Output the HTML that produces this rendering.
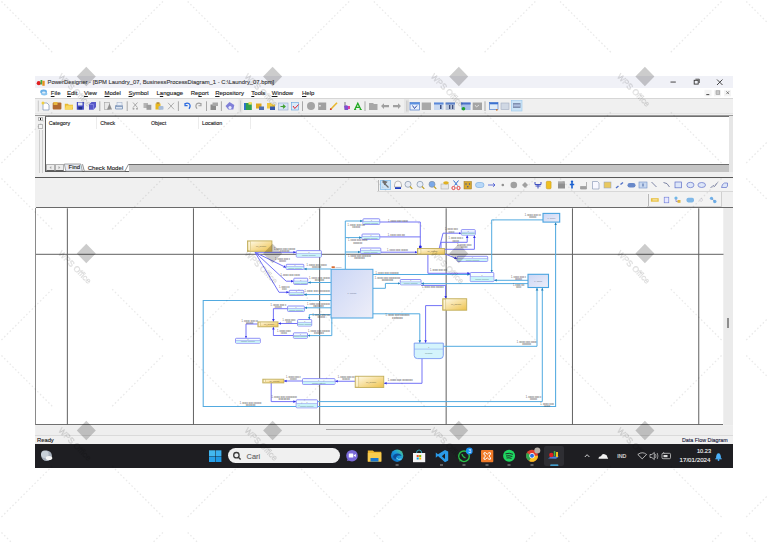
<!DOCTYPE html>
<html><head><meta charset="utf-8">
<style>
*{margin:0;padding:0;box-sizing:border-box}
html,body{width:768px;height:543px;overflow:hidden;background:#fff;font-family:"Liberation Sans",sans-serif;position:relative}
.a{position:absolute}
.t{position:absolute;white-space:nowrap;line-height:1;-webkit-text-stroke:0.12px currentColor}
.u{text-decoration:underline;text-decoration-thickness:0.5px;text-underline-offset:0.6px}
svg{position:absolute;left:0;top:0;overflow:visible}
</style></head><body>
<div class="a" style="left:35px;top:76px;width:698px;height:392px;background:#f0f0f0;"></div>
<div class="a" style="left:35px;top:76px;width:698px;height:12px;background:#f0f1f7;"></div>
<div class="t" style="left:47.5px;top:80.4px;font-size:5.85px;color:#3a3a3a;">PowerDesigner - [BPM Laundry_07, BusinessProcessDiagram_1 - C:\Laundry_07.bpm]</div>
<div class="a" style="left:35px;top:88px;width:698px;height:10px;background:#ffffff;"></div>
<div class="t" style="left:50.8px;top:89.8px;font-size:6.0px;color:#1a1a1a;"><span class="u">F</span>ile</div>
<div class="t" style="left:67px;top:89.8px;font-size:6.0px;color:#1a1a1a;"><span class="u">E</span>dit</div>
<div class="t" style="left:84px;top:89.8px;font-size:6.0px;color:#1a1a1a;"><span class="u">V</span>iew</div>
<div class="t" style="left:104.5px;top:89.8px;font-size:6.0px;color:#1a1a1a;"><span class="u">M</span>odel</div>
<div class="t" style="left:128.5px;top:89.8px;font-size:6.0px;color:#1a1a1a;"><span class="u">S</span>ymbol</div>
<div class="t" style="left:156.5px;top:89.8px;font-size:6.0px;color:#1a1a1a;">L<span class="u">a</span>nguage</div>
<div class="t" style="left:190.7px;top:89.8px;font-size:6.0px;color:#1a1a1a;">Re<span class="u">p</span>ort</div>
<div class="t" style="left:215.2px;top:89.8px;font-size:6.0px;color:#1a1a1a;"><span class="u">R</span>epository</div>
<div class="t" style="left:251.3px;top:89.8px;font-size:6.0px;color:#1a1a1a;"><span class="u">T</span>ools</div>
<div class="t" style="left:271.8px;top:89.8px;font-size:6.0px;color:#1a1a1a;"><span class="u">W</span>indow</div>
<div class="t" style="left:302px;top:89.8px;font-size:6.0px;color:#1a1a1a;"><span class="u">H</span>elp</div>
<div class="a" style="left:35px;top:98px;width:698px;height:1px;background:#d6d6d6;"></div>
<div class="a" style="left:35px;top:113.2px;width:698px;height:0.8px;background:#e4e4e4;"></div>
<div class="a" style="left:35px;top:115px;width:698px;height:1px;background:#9a9a9a;"></div>
<div class="a" style="left:44.8px;top:116px;width:684px;height:56px;background:#ffffff;border-left:1.3px solid #5a5a5a;border-top:1px solid #707070"></div>
<div class="t" style="left:48.7px;top:121.0px;font-size:5.3px;color:#222;">Category</div>
<div class="t" style="left:100.2px;top:121.0px;font-size:5.3px;color:#222;">Check</div>
<div class="t" style="left:150.9px;top:121.0px;font-size:5.3px;color:#222;">Object</div>
<div class="t" style="left:202.1px;top:121.0px;font-size:5.3px;color:#222;">Location</div>
<div class="a" style="left:96.3px;top:117px;width:0.6px;height:12px;background:#ececec;"></div>
<div class="a" style="left:198.4px;top:117px;width:0.6px;height:12px;background:#ececec;"></div>
<div class="a" style="left:250px;top:117px;width:0.6px;height:12px;background:#ececec;"></div>
<div class="a" style="left:128.7px;top:163.5px;width:600px;height:8.5px;background:#c4c4c4;border-top:1px solid #6e6e6e"></div>
<div class="a" style="left:44.8px;top:171.2px;width:84px;height:0.9px;background:#5a5a5a;"></div>
<div class="a" style="left:46px;top:164px;width:8.5px;height:7.3px;background:#ececec;border:0.6px solid #b0b0b0;border-bottom:1px solid #606060"></div>
<div class="a" style="left:54.6px;top:164px;width:9px;height:7.3px;background:#ececec;border:0.6px solid #b0b0b0;border-bottom:1px solid #606060"></div>
<svg width="768" height="543"><path d="M64.3 164 l1.6 7.2 h16.5 l-1.6 -7.2z" fill="#e6eaf2" stroke="#707070" stroke-width="0.6"/><path d="M82.5 164.2 l1.8 7 h40.6 l3.8 -7.2" fill="#fff" stroke="#606060" stroke-width="0.7"/><path d="M49.5 167.6 l1.8 -1.6 v3.2z M60.3 167.6 l-1.8 -1.6 v3.2z" fill="#a8a8a8"/></svg>
<div class="t" style="left:68.6px;top:165.3px;font-size:5.95px;color:#1a1a1a;">Find</div>
<div class="t" style="left:87.7px;top:164.6px;font-size:6.1px;color:#1a1a1a;">Check Model</div>
<div class="a" style="left:37.8px;top:116.5px;width:5.2px;height:4.6px;background:#f4f4f4;border:0.6px solid #b8b8b8"></div>
<div class="a" style="left:39.6px;top:117.8px;width:1.8px;height:1.8px;background:#111;"></div>
<div class="a" style="left:37.8px;top:123.8px;width:5.2px;height:5.6px;background:#f4f4f4;border:0.6px solid #b8b8b8"></div>
<div class="a" style="left:39.3px;top:130px;width:0.8px;height:42.5px;background:#d0d0d0;"></div>
<div class="a" style="left:42px;top:130px;width:0.8px;height:42.5px;background:#d0d0d0;"></div>
<div class="a" style="left:728.5px;top:116px;width:4.5px;height:56px;background:#e6e6e6;"></div>
<div class="a" style="left:35px;top:177px;width:698px;height:1px;background:#585858;"></div>
<div class="a" style="left:377px;top:178.6px;width:355.5px;height:13.5px;background:#f3f3f3;border-bottom:1px solid #d8d8d8"></div>
<div class="a" style="left:647px;top:192.3px;width:74.5px;height:14.8px;background:#f3f3f3;border-bottom:1px solid #d0d0d0;border-right:1.5px solid #d0d0d0"></div>
<div class="a" style="left:377.6px;top:180px;width:1.2px;height:11px;background:#b8b8b8;"></div>
<div class="a" style="left:647.5px;top:193.5px;width:1.2px;height:12.5px;background:#b8b8b8;"></div>
<div class="a" style="left:379.7px;top:179.6px;width:11px;height:10.4px;background:#cce4f7;border:1px solid #99c9ef"></div>
<div class="a" style="left:35.3px;top:207.5px;width:688.2px;height:217.5px;background:#ffffff;border-left:1.4px solid #8a8a8a;border-bottom:1px solid #707070"></div>
<div class="a" style="left:723.8px;top:208.2px;width:9.2px;height:217px;background:#ebebeb;"></div>
<div class="a" style="left:35.5px;top:207.1px;width:697px;height:1.1px;background:#6a6a6a;"></div>
<div class="a" style="left:726.5px;top:318px;width:2.2px;height:10.2px;background:#8e8e8e;"></div>
<div class="a" style="left:35.5px;top:425.5px;width:697.5px;height:9.5px;background:#eeeeee;"></div>
<div class="a" style="left:326px;top:428.9px;width:105px;height:1.6px;background:#a6a6a6;"></div>
<div class="a" style="left:35px;top:435px;width:698px;height:0.8px;background:#dadada;"></div>
<div class="t" style="left:37px;top:437.9px;font-size:5.8px;color:#202020;">Ready</div>
<div class="t" style="left:682px;top:437.9px;font-size:5.35px;color:#1c1c40;">Data Flow Diagram</div>
<div class="a" style="left:35px;top:443.7px;width:698px;height:24px;background:#1e1e22;"></div>
<div class="a" style="left:544.3px;top:446.1px;width:19.4px;height:20.2px;background:#2e2e33;border-radius:2px"></div>
<div class="a" style="left:227.7px;top:448.4px;width:112px;height:15px;background:#f0f0f0;border-radius:7.5px"></div>
<div class="t" style="left:246.6px;top:453.0px;font-size:7.4px;color:#5e5e5e;">Cari</div>
<div class="t" style="left:617.3px;top:453.7px;font-size:5.2px;color:#e0e0e0;">IND</div>
<div class="t" style="left:697px;top:449px;font-size:5.6px;color:#f0f0f0;">10.23</div>
<div class="t" style="left:679.5px;top:457px;font-size:6.2px;color:#f0f0f0;">17/01/2024</div>
<svg width="768" height="543" viewBox="0 0 768 543">
<defs>
<linearGradient id="gy" x1="0" y1="0" x2="1" y2="1"><stop offset="0" stop-color="#fffcee"/><stop offset="1" stop-color="#eec24c"/></linearGradient>
<linearGradient id="gp" x1="0" y1="0" x2="1" y2="1"><stop offset="0" stop-color="#cad6f6"/><stop offset="1" stop-color="#eeeef8"/></linearGradient>
<marker id="mb" markerWidth="4" markerHeight="4" refX="2.6" refY="1.6" orient="auto" markerUnits="userSpaceOnUse"><path d="M0 0.3 L2.6 1.6 L0 2.9z" fill="#3030e8"/></marker>
<marker id="ml" markerWidth="4" markerHeight="4" refX="2.6" refY="1.6" orient="auto" markerUnits="userSpaceOnUse"><path d="M0 0.3 L2.6 1.6 L0 2.9z" fill="#2080b8"/></marker>
</defs>
<rect x="66.85000000000001" y="208.3" width="1.0" height="216.5" fill="#626262"/>
<rect x="192.95" y="208.3" width="1.0" height="216.5" fill="#626262"/>
<rect x="319.15" y="208.3" width="1.0" height="216.5" fill="#626262"/>
<rect x="445.65" y="208.3" width="1.0" height="216.5" fill="#626262"/>
<rect x="571.95" y="208.3" width="1.0" height="216.5" fill="#626262"/>
<rect x="698.25" y="208.3" width="1.0" height="216.5" fill="#626262"/>
<rect x="36" y="253.8" width="687.5" height="1.0" fill="#626262"/>
<path d="M543 219.9 H491.7 V272.3" fill="none" stroke="#52aae0" stroke-width="1.0" marker-end="url(#ml)"/>
<path d="M331 300.5 H203.2 V406.5 H555.6 V222.5" fill="none" stroke="#52aae0" stroke-width="1.05" marker-end="url(#ml)"/>
<path d="M317.5 401.6 H542.3 V288" fill="none" stroke="#52aae0" stroke-width="1.0" marker-end="url(#ml)"/>
<path d="M443.3 346.3 H537 V288" fill="none" stroke="#52aae0" stroke-width="1.0" marker-end="url(#ml)"/>
<path d="M528 280.3 H494.2" fill="none" stroke="#52aae0" stroke-width="1.0" marker-end="url(#ml)"/>
<path d="M372.9 274.5 H470" fill="none" stroke="#52aae0" stroke-width="1.0" marker-end="url(#ml)"/>
<path d="M528 283.6 H421.2" fill="none" stroke="#52aae0" stroke-width="1.0" marker-end="url(#ml)"/>
<path d="M372.9 288.3 H385.4 V283.4 H400.2" fill="none" stroke="#52aae0" stroke-width="1.0" marker-end="url(#ml)"/>
<path d="M372.9 313.8 H419.8 V342.8" fill="none" stroke="#52aae0" stroke-width="1.0" marker-end="url(#ml)"/>
<path d="M345.3 269 V221 H362.8" fill="none" stroke="#52aae0" stroke-width="1.0" marker-end="url(#ml)"/>
<path d="M345.3 237.6 H361.8" fill="none" stroke="#52aae0" stroke-width="1.0" marker-end="url(#ml)"/>
<path d="M345.3 252 H360.3" fill="none" stroke="#52aae0" stroke-width="1.0" marker-end="url(#ml)"/>
<path d="M331 269 H304" fill="none" stroke="#52aae0" stroke-width="1.0" marker-end="url(#ml)"/>
<path d="M331 282.5 H308.1" fill="none" stroke="#52aae0" stroke-width="1.0" marker-end="url(#ml)"/>
<path d="M331 294.6 H304" fill="none" stroke="#52aae0" stroke-width="1.0" marker-end="url(#ml)"/>
<path d="M331 307.8 H304.6" fill="none" stroke="#52aae0" stroke-width="1.0" marker-end="url(#ml)"/>
<path d="M331 314.6 H309.3 V319.3" fill="none" stroke="#52aae0" stroke-width="1.0" marker-end="url(#ml)"/>
<path d="M331.8 318 V335.6 H307.7" fill="none" stroke="#52aae0" stroke-width="1.0" marker-end="url(#ml)"/>
<path d="M379.7 222 H420.3 V248.3" fill="none" stroke="#6c6cf6" stroke-width="0.95" marker-end="url(#mb)"/>
<path d="M379.7 236.9 H420.3" fill="none" stroke="#6c6cf6" stroke-width="0.95"/>
<path d="M380.8 252.2 H417.3" fill="none" stroke="#6c6cf6" stroke-width="0.95" marker-end="url(#mb)"/>
<path d="M427.9 254.2 V273.3 H470" fill="none" stroke="#6c6cf6" stroke-width="0.95" marker-end="url(#mb)"/>
<path d="M439.2 248.5 L443 233.2 H461.1" fill="none" stroke="#6c6cf6" stroke-width="0.95" marker-end="url(#mb)"/>
<path d="M441 248.5 V242.3 H467.2 V235.4" fill="none" stroke="#6c6cf6" stroke-width="0.95" marker-end="url(#mb)"/>
<path d="M444.5 249.3 H474.4 V235.4" fill="none" stroke="#6c6cf6" stroke-width="0.95" marker-end="url(#mb)"/>
<path d="M444 253.5 L457 258.8" fill="none" stroke="#6c6cf6" stroke-width="0.95" marker-end="url(#mb)"/>
<path d="M421 285.4 H445.6 V298.5" fill="none" stroke="#6c6cf6" stroke-width="0.95" marker-end="url(#mb)"/>
<path d="M442.7 305.6 H425.6 V342.8" fill="none" stroke="#6c6cf6" stroke-width="0.95" marker-end="url(#mb)"/>
<path d="M422 358.6 V383.3 H384" fill="none" stroke="#6c6cf6" stroke-width="0.95" marker-end="url(#mb)"/>
<path d="M355.2 381.25 H335.2" fill="none" stroke="#6c6cf6" stroke-width="0.95" marker-end="url(#mb)"/>
<path d="M255 252.3 H296" fill="none" stroke="#6c6cf6" stroke-width="0.95" marker-end="url(#mb)"/>
<path d="M255 252.3 L286 267.5" fill="none" stroke="#6c6cf6" stroke-width="0.95" marker-end="url(#mb)"/>
<path d="M255 252.3 L286.2 281.2 H293.6" fill="none" stroke="#6c6cf6" stroke-width="0.95" marker-end="url(#mb)"/>
<path d="M255 252.3 L279 292.3 H289" fill="none" stroke="#6c6cf6" stroke-width="0.95" marker-end="url(#mb)"/>
<path d="M287.6 308.7 H273.4 V321.7" fill="none" stroke="#6c6cf6" stroke-width="0.95" marker-end="url(#mb)"/>
<path d="M297.6 323.5 H278.2" fill="none" stroke="#6c6cf6" stroke-width="0.95" marker-end="url(#mb)"/>
<path d="M293.4 335.5 H273.4 V327" fill="none" stroke="#6c6cf6" stroke-width="0.95" marker-end="url(#mb)"/>
<path d="M257.9 324 H246 V338.1" fill="none" stroke="#6c6cf6" stroke-width="0.95" marker-end="url(#mb)"/>
<path d="M302.5 381 H284" fill="none" stroke="#6c6cf6" stroke-width="0.95" marker-end="url(#mb)"/>
<path d="M271.2 382.8 V401.6 H296" fill="none" stroke="#6c6cf6" stroke-width="0.95" marker-end="url(#mb)"/>
<circle cx="420.3" cy="247" r="1.4" fill="#2424e0"/>
<rect x="247.5" y="240.9" width="24.399999999999977" height="10.400000000000006" fill="url(#gy)" stroke="#c2ae5a" stroke-width="0.9"/>
<rect x="247.95" y="241.35" width="2.6839999999999975" height="9.500000000000005" fill="#fff6d8" fill-opacity="0.6" stroke="#c8b468" stroke-width="0.5"/>
<text x="261.042" y="246.90000000000003" font-family="Liberation Sans" font-size="2.2" fill="#4a4430" text-anchor="middle">xx_xxxxxx</text>
<rect x="417.5" y="248.5" width="27.0" height="5.699999999999989" fill="url(#gy)" stroke="#c2ae5a" stroke-width="0.9"/>
<rect x="417.95" y="248.95" width="2.97" height="4.799999999999988" fill="#fff6d8" fill-opacity="0.6" stroke="#c8b468" stroke-width="0.5"/>
<text x="432.485" y="252.15" font-family="Liberation Sans" font-size="2.2" fill="#4a4430" text-anchor="middle">xx_xxxxxx</text>
<rect x="442.7" y="298.75" width="24.0" height="11.449999999999989" fill="url(#gy)" stroke="#c2ae5a" stroke-width="0.9"/>
<rect x="443.15" y="299.2" width="2.64" height="10.549999999999988" fill="#fff6d8" fill-opacity="0.6" stroke="#c8b468" stroke-width="0.5"/>
<text x="456.02" y="305.27500000000003" font-family="Liberation Sans" font-size="2.2" fill="#4a4430" text-anchor="middle">xx_xxxxxx</text>
<rect x="257.9" y="321.9" width="20.100000000000023" height="4.900000000000034" fill="url(#gy)" stroke="#c2ae5a" stroke-width="0.9"/>
<rect x="258.34999999999997" y="322.34999999999997" width="2.2110000000000025" height="4.000000000000034" fill="#fff6d8" fill-opacity="0.6" stroke="#c8b468" stroke-width="0.5"/>
<text x="269.0555" y="325.15000000000003" font-family="Liberation Sans" font-size="2.2" fill="#4a4430" text-anchor="middle">xx_xxxxxx</text>
<rect x="262.8" y="379.2" width="21.0" height="3.6999999999999886" fill="url(#gy)" stroke="#c2ae5a" stroke-width="0.9"/>
<rect x="263.25" y="379.65" width="2.31" height="2.7999999999999887" fill="#fff6d8" fill-opacity="0.6" stroke="#c8b468" stroke-width="0.5"/>
<text x="274.45500000000004" y="381.84999999999997" font-family="Liberation Sans" font-size="2.2" fill="#4a4430" text-anchor="middle">xx_xxxxxx</text>
<rect x="355.2" y="376.25" width="28.55000000000001" height="11.199999999999989" fill="url(#gy)" stroke="#c2ae5a" stroke-width="0.9"/>
<rect x="355.65" y="376.7" width="3.140500000000001" height="10.299999999999988" fill="#fff6d8" fill-opacity="0.6" stroke="#c8b468" stroke-width="0.5"/>
<text x="371.04525" y="382.65000000000003" font-family="Liberation Sans" font-size="2.2" fill="#4a4430" text-anchor="middle">xx_xxxxxx</text>
<rect x="296.3" y="250.6" width="25.099999999999966" height="6.500000000000028" rx="0.8" fill="#f4fdff" stroke="#7676f4" stroke-width="0.8"/>
<rect x="296.7" y="253.525" width="24.299999999999965" height="3.175000000000016" fill="#c8f4f8"/>
<rect x="296.3" y="253.275" width="25.099999999999966" height="0.5" fill="#9090f0"/>
<text x="308.85" y="253.125" font-family="Liberation Sans" font-size="1.6" fill="#555" text-anchor="middle">1</text>
<text x="308.85" y="256.125" font-family="Liberation Sans" font-size="2.0" fill="#3e6a70" text-anchor="middle">xxxxxx xxxxxxx</text>
<rect x="286.2" y="264.3" width="17.600000000000023" height="5.199999999999989" rx="0.8" fill="#f4fdff" stroke="#7676f4" stroke-width="0.8"/>
<rect x="286.59999999999997" y="266.64" width="16.800000000000022" height="2.459999999999994" fill="#c8f4f8"/>
<rect x="286.2" y="266.39" width="17.600000000000023" height="0.5" fill="#9090f0"/>
<text x="295.0" y="266.24" font-family="Liberation Sans" font-size="1.6" fill="#555" text-anchor="middle">1</text>
<text x="295.0" y="268.72" font-family="Liberation Sans" font-size="2.0" fill="#3e6a70" text-anchor="middle">xxxxxx xxxxxxx</text>
<rect x="293.8" y="278.2" width="13.899999999999977" height="6.300000000000011" rx="0.8" fill="#f4fdff" stroke="#7676f4" stroke-width="0.8"/>
<rect x="294.2" y="281.03499999999997" width="13.099999999999977" height="3.0650000000000066" fill="#c8f4f8"/>
<rect x="293.8" y="280.78499999999997" width="13.899999999999977" height="0.5" fill="#9090f0"/>
<text x="300.75" y="280.635" font-family="Liberation Sans" font-size="1.6" fill="#555" text-anchor="middle">1</text>
<text x="300.75" y="283.555" font-family="Liberation Sans" font-size="2.0" fill="#3e6a70" text-anchor="middle">xxxxxx xxxxxxx</text>
<rect x="289.2" y="290.3" width="14.600000000000023" height="5.199999999999989" rx="0.8" fill="#f4fdff" stroke="#7676f4" stroke-width="0.8"/>
<rect x="289.59999999999997" y="292.64" width="13.800000000000022" height="2.459999999999994" fill="#c8f4f8"/>
<rect x="289.2" y="292.39" width="14.600000000000023" height="0.5" fill="#9090f0"/>
<text x="296.5" y="292.24" font-family="Liberation Sans" font-size="1.6" fill="#555" text-anchor="middle">1</text>
<text x="296.5" y="294.72" font-family="Liberation Sans" font-size="2.0" fill="#3e6a70" text-anchor="middle">xxxxxx xxxxxxx</text>
<rect x="363" y="218.75" width="16.69999999999999" height="5.75" rx="0.8" fill="#f4fdff" stroke="#7676f4" stroke-width="0.8"/>
<rect x="363.4" y="221.3375" width="15.899999999999988" height="2.7625" fill="#c8f4f8"/>
<rect x="363" y="221.0875" width="16.69999999999999" height="0.5" fill="#9090f0"/>
<text x="371.35" y="220.9375" font-family="Liberation Sans" font-size="1.6" fill="#555" text-anchor="middle">1</text>
<text x="371.35" y="223.6375" font-family="Liberation Sans" font-size="2.0" fill="#3e6a70" text-anchor="middle">xxxxxx xxxxxxx</text>
<rect x="362" y="234" width="17.69999999999999" height="5.400000000000006" rx="0.8" fill="#f4fdff" stroke="#7676f4" stroke-width="0.8"/>
<rect x="362.4" y="236.43" width="16.899999999999988" height="2.5700000000000034" fill="#c8f4f8"/>
<rect x="362" y="236.18" width="17.69999999999999" height="0.5" fill="#9090f0"/>
<text x="370.85" y="236.03" font-family="Liberation Sans" font-size="1.6" fill="#555" text-anchor="middle">1</text>
<text x="370.85" y="238.59" font-family="Liberation Sans" font-size="2.0" fill="#3e6a70" text-anchor="middle">xxxxxx xxxxxxx</text>
<rect x="360.5" y="248" width="20.30000000000001" height="5.400000000000006" rx="0.8" fill="#f4fdff" stroke="#7676f4" stroke-width="0.8"/>
<rect x="360.9" y="250.43" width="19.50000000000001" height="2.5700000000000034" fill="#c8f4f8"/>
<rect x="360.5" y="250.18" width="20.30000000000001" height="0.5" fill="#9090f0"/>
<text x="370.65" y="250.03" font-family="Liberation Sans" font-size="1.6" fill="#555" text-anchor="middle">1</text>
<text x="370.65" y="252.59" font-family="Liberation Sans" font-size="2.0" fill="#3e6a70" text-anchor="middle">xxxxxx xxxxxxx</text>
<rect x="461.3" y="229.6" width="13.949999999999989" height="5.5" rx="0.8" fill="#f4fdff" stroke="#7676f4" stroke-width="0.8"/>
<rect x="461.7" y="232.075" width="13.149999999999988" height="2.6250000000000004" fill="#c8f4f8"/>
<rect x="461.3" y="231.825" width="13.949999999999989" height="0.5" fill="#9090f0"/>
<text x="468.275" y="231.67499999999998" font-family="Liberation Sans" font-size="1.6" fill="#555" text-anchor="middle">1</text>
<text x="468.275" y="234.275" font-family="Liberation Sans" font-size="2.0" fill="#3e6a70" text-anchor="middle">xxxxxx xxxxxxx</text>
<rect x="457.2" y="256.3" width="30.5" height="5.099999999999966" rx="0.8" fill="#f4fdff" stroke="#7676f4" stroke-width="0.8"/>
<rect x="457.59999999999997" y="258.59499999999997" width="29.7" height="2.4049999999999816" fill="#c8f4f8"/>
<rect x="457.2" y="258.34499999999997" width="30.5" height="0.5" fill="#9090f0"/>
<text x="472.45" y="258.195" font-family="Liberation Sans" font-size="1.6" fill="#555" text-anchor="middle">1</text>
<text x="472.45" y="260.635" font-family="Liberation Sans" font-size="2.0" fill="#3e6a70" text-anchor="middle">xxxxxx xxxxxxx</text>
<rect x="470.3" y="272.5" width="23.5" height="9.100000000000023" rx="0.8" fill="#f4fdff" stroke="#7676f4" stroke-width="0.8"/>
<rect x="470.7" y="276.595" width="22.7" height="4.605000000000013" fill="#c8f4f8"/>
<rect x="470.3" y="276.345" width="23.5" height="0.5" fill="#9090f0"/>
<text x="482.05" y="276.19500000000005" font-family="Liberation Sans" font-size="1.6" fill="#555" text-anchor="middle">1</text>
<text x="482.05" y="280.235" font-family="Liberation Sans" font-size="2.0" fill="#3e6a70" text-anchor="middle">xxxxxx xxxxxxx</text>
<rect x="400.3" y="279.5" width="20.69999999999999" height="5.300000000000011" rx="0.8" fill="#f4fdff" stroke="#7676f4" stroke-width="0.8"/>
<rect x="400.7" y="281.885" width="19.899999999999988" height="2.515000000000007" fill="#c8f4f8"/>
<rect x="400.3" y="281.635" width="20.69999999999999" height="0.5" fill="#9090f0"/>
<text x="410.65" y="281.485" font-family="Liberation Sans" font-size="1.6" fill="#555" text-anchor="middle">1</text>
<text x="410.65" y="284.005" font-family="Liberation Sans" font-size="2.0" fill="#3e6a70" text-anchor="middle">xxxxxx xxxxxxx</text>
<rect x="287.6" y="306" width="16.799999999999955" height="5.5" rx="0.8" fill="#f4fdff" stroke="#7676f4" stroke-width="0.8"/>
<rect x="288.0" y="308.475" width="15.999999999999954" height="2.6250000000000004" fill="#c8f4f8"/>
<rect x="287.6" y="308.225" width="16.799999999999955" height="0.5" fill="#9090f0"/>
<text x="296.0" y="308.07500000000005" font-family="Liberation Sans" font-size="1.6" fill="#555" text-anchor="middle">1</text>
<text x="296.0" y="310.675" font-family="Liberation Sans" font-size="2.0" fill="#3e6a70" text-anchor="middle">xxxxxx xxxxxxx</text>
<rect x="297.6" y="319.5" width="14.099999999999966" height="6.5" rx="0.8" fill="#f4fdff" stroke="#7676f4" stroke-width="0.8"/>
<rect x="298.0" y="322.425" width="13.299999999999965" height="3.1750000000000003" fill="#c8f4f8"/>
<rect x="297.6" y="322.175" width="14.099999999999966" height="0.5" fill="#9090f0"/>
<text x="304.65" y="322.02500000000003" font-family="Liberation Sans" font-size="1.6" fill="#555" text-anchor="middle">1</text>
<text x="304.65" y="325.025" font-family="Liberation Sans" font-size="2.0" fill="#3e6a70" text-anchor="middle">xxxxxx xxxxxxx</text>
<rect x="293.4" y="332.8" width="14.100000000000023" height="5.5" rx="0.8" fill="#f4fdff" stroke="#7676f4" stroke-width="0.8"/>
<rect x="293.79999999999995" y="335.27500000000003" width="13.300000000000022" height="2.6250000000000004" fill="#c8f4f8"/>
<rect x="293.4" y="335.02500000000003" width="14.100000000000023" height="0.5" fill="#9090f0"/>
<text x="300.45" y="334.87500000000006" font-family="Liberation Sans" font-size="1.6" fill="#555" text-anchor="middle">1</text>
<text x="300.45" y="337.475" font-family="Liberation Sans" font-size="2.0" fill="#3e6a70" text-anchor="middle">xxxxxx xxxxxxx</text>
<rect x="235.5" y="338.3" width="24.80000000000001" height="4.899999999999977" rx="0.8" fill="#f4fdff" stroke="#7676f4" stroke-width="0.8"/>
<rect x="235.9" y="340.505" width="24.00000000000001" height="2.294999999999988" fill="#c8f4f8"/>
<rect x="235.5" y="340.255" width="24.80000000000001" height="0.5" fill="#9090f0"/>
<text x="247.9" y="340.105" font-family="Liberation Sans" font-size="1.6" fill="#555" text-anchor="middle">1</text>
<text x="247.9" y="342.465" font-family="Liberation Sans" font-size="2.0" fill="#3e6a70" text-anchor="middle">xxxxxx xxxxxxx</text>
<rect x="302.5" y="378.6" width="32.5" height="5.7999999999999545" rx="0.8" fill="#f4fdff" stroke="#7676f4" stroke-width="0.8"/>
<rect x="302.9" y="381.21" width="31.7" height="2.789999999999975" fill="#c8f4f8"/>
<rect x="302.5" y="380.96" width="32.5" height="0.5" fill="#9090f0"/>
<text x="318.75" y="380.81" font-family="Liberation Sans" font-size="1.6" fill="#555" text-anchor="middle">1</text>
<text x="318.75" y="383.53" font-family="Liberation Sans" font-size="2.0" fill="#3e6a70" text-anchor="middle">xxxxxx xxxxxxx</text>
<rect x="296.2" y="399.8" width="21.30000000000001" height="8.0" rx="0.8" fill="#f4fdff" stroke="#7676f4" stroke-width="0.8"/>
<rect x="296.59999999999997" y="403.40000000000003" width="20.50000000000001" height="4.0" fill="#c8f4f8"/>
<rect x="296.2" y="403.15000000000003" width="21.30000000000001" height="0.5" fill="#9090f0"/>
<text x="306.85" y="403.00000000000006" font-family="Liberation Sans" font-size="1.6" fill="#555" text-anchor="middle">1</text>
<text x="306.85" y="406.6" font-family="Liberation Sans" font-size="2.0" fill="#3e6a70" text-anchor="middle">xxxxxx xxxxxxx</text>
<rect x="543" y="213.4" width="16.700000000000045" height="8.699999999999989" fill="url(#gp)" stroke="#4aa4e0" stroke-width="1.1"/>
<text x="551.35" y="218.55" font-family="Liberation Sans" font-size="2.2" fill="#505a78" text-anchor="middle">x. xxxxx</text>
<rect x="528" y="274.3" width="20.5" height="13.199999999999989" fill="url(#gp)" stroke="#4aa4e0" stroke-width="1.1"/>
<text x="538.25" y="281.7" font-family="Liberation Sans" font-size="2.2" fill="#505a78" text-anchor="middle">x. xxxxx</text>
<rect x="331.1" y="269.3" width="41.799999999999955" height="48.69999999999999" fill="url(#gp)" stroke="#4aa4e0" stroke-width="1.0"/>
<text x="352.0" y="294.45" font-family="Liberation Sans" font-size="2.2" fill="#505a78" text-anchor="middle">x. xxxxxx</text>
<rect x="331.6" y="266.3" width="3.2" height="1.8" fill="#d86a30"/>
<text x="335.5" y="268" font-family="Liberation Sans" font-size="2.0" fill="#666" text-anchor="start">xxxxxx</text>
<path d="M414.2 343.1 H443.3 V355.5 Q443.3 358.6 440 358.6 H417.5 Q414.2 358.6 414.2 355.5z" fill="#d4f4fc" stroke="#6a8af0" stroke-width="0.8"/>
<rect x="414.2" y="348.8" width="29.1" height="0.5" fill="#7a9af0"/>
<text x="428.7" y="347.5" font-family="Liberation Sans" font-size="1.6" fill="#555" text-anchor="middle">1</text>
<text x="428.7" y="354" font-family="Liberation Sans" font-size="2.1" fill="#3e6a70" text-anchor="middle">xxxxxxx</text>
<text x="273.9" y="249.8" font-family="Liberation Sans" font-size="2.6" fill="#4a4a4a" textLength="21.400000000000034" lengthAdjust="spacingAndGlyphs">1. xxxxx xxxx xxxxxx</text>
<text x="279.78499999999997" y="251.9" font-family="Liberation Sans" font-size="2.6" fill="#4a4a4a" textLength="9.630000000000015" lengthAdjust="spacingAndGlyphs">xxxxxxx</text>
<text x="275" y="259.8" font-family="Liberation Sans" font-size="2.6" fill="#4a4a4a" textLength="15" lengthAdjust="spacingAndGlyphs">1. xxxxx xxxx x</text>
<text x="279.125" y="261.9" font-family="Liberation Sans" font-size="2.6" fill="#4a4a4a" textLength="6.75" lengthAdjust="spacingAndGlyphs">xxxxxxx</text>
<text x="280.4" y="275.5" font-family="Liberation Sans" font-size="2.6" fill="#4a4a4a" textLength="19.5" lengthAdjust="spacingAndGlyphs">1. xxxxx xxxx xxxxx</text>
<text x="279" y="287.8" font-family="Liberation Sans" font-size="2.6" fill="#4a4a4a" textLength="10.5" lengthAdjust="spacingAndGlyphs">1. xxxxx xx</text>
<text x="281.8875" y="289.9" font-family="Liberation Sans" font-size="2.6" fill="#4a4a4a" textLength="4.7250000000000005" lengthAdjust="spacingAndGlyphs">xxxxxxx</text>
<text x="306.4" y="265.5" font-family="Liberation Sans" font-size="2.6" fill="#4a4a4a" textLength="20.200000000000045" lengthAdjust="spacingAndGlyphs">1. xxxxx xxxx xxxxx</text>
<text x="311.955" y="267.59999999999997" font-family="Liberation Sans" font-size="2.6" fill="#4a4a4a" textLength="9.090000000000021" lengthAdjust="spacingAndGlyphs">xxxxxxx</text>
<text x="309" y="279.0" font-family="Liberation Sans" font-size="2.6" fill="#4a4a4a" textLength="21" lengthAdjust="spacingAndGlyphs">1. xxxxx xxxx xxxxxx</text>
<text x="314.775" y="281.09999999999997" font-family="Liberation Sans" font-size="2.6" fill="#4a4a4a" textLength="9.450000000000001" lengthAdjust="spacingAndGlyphs">xxxxxxx</text>
<text x="304.5" y="292.40000000000003" font-family="Liberation Sans" font-size="2.6" fill="#4a4a4a" textLength="25.5" lengthAdjust="spacingAndGlyphs">1. xxxxx xxxx xxxxxxxxxx</text>
<text x="347.5" y="226.20000000000002" font-family="Liberation Sans" font-size="2.6" fill="#4a4a4a" textLength="17.5" lengthAdjust="spacingAndGlyphs">1. xxxxx xxxx xxx</text>
<text x="352.3125" y="228.3" font-family="Liberation Sans" font-size="2.6" fill="#4a4a4a" textLength="7.875" lengthAdjust="spacingAndGlyphs">xxxxxxx</text>
<text x="348" y="241.4" font-family="Liberation Sans" font-size="2.6" fill="#4a4a4a" textLength="19.5" lengthAdjust="spacingAndGlyphs">1. xxxxx xxxx xxxxx</text>
<text x="353.3625" y="243.5" font-family="Liberation Sans" font-size="2.6" fill="#4a4a4a" textLength="8.775" lengthAdjust="spacingAndGlyphs">xxxxxxx</text>
<text x="348" y="256.6" font-family="Liberation Sans" font-size="2.6" fill="#4a4a4a" textLength="23" lengthAdjust="spacingAndGlyphs">1. xxxxx xxxx xxxxxxxx</text>
<text x="354.325" y="258.7" font-family="Liberation Sans" font-size="2.6" fill="#4a4a4a" textLength="10.35" lengthAdjust="spacingAndGlyphs">xxxxxxx</text>
<text x="388" y="221.60000000000002" font-family="Liberation Sans" font-size="2.6" fill="#4a4a4a" textLength="20" lengthAdjust="spacingAndGlyphs">1. xxxxx xxxx xxxxx</text>
<text x="387.8" y="236.10000000000002" font-family="Liberation Sans" font-size="2.6" fill="#4a4a4a" textLength="17.19999999999999" lengthAdjust="spacingAndGlyphs">1. xxxxx xxxx xxx</text>
<text x="387" y="251.4" font-family="Liberation Sans" font-size="2.6" fill="#4a4a4a" textLength="21" lengthAdjust="spacingAndGlyphs">1. xxxxx xxxx xxxxxx</text>
<text x="445" y="230.4" font-family="Liberation Sans" font-size="2.6" fill="#4a4a4a" textLength="12.800000000000011" lengthAdjust="spacingAndGlyphs">1. xxxxx xxxx</text>
<text x="448.52" y="232.5" font-family="Liberation Sans" font-size="2.6" fill="#4a4a4a" textLength="5.760000000000005" lengthAdjust="spacingAndGlyphs">xxxxxxx</text>
<text x="448.5" y="239.4" font-family="Liberation Sans" font-size="2.6" fill="#4a4a4a" textLength="14.5" lengthAdjust="spacingAndGlyphs">1. xxxxx xxxx x</text>
<text x="452.4875" y="241.5" font-family="Liberation Sans" font-size="2.6" fill="#4a4a4a" textLength="6.525" lengthAdjust="spacingAndGlyphs">xxxxxxx</text>
<text x="457" y="246.10000000000002" font-family="Liberation Sans" font-size="2.6" fill="#4a4a4a" textLength="14.399999999999977" lengthAdjust="spacingAndGlyphs">1. xxxxx xxxx </text>
<text x="460.96" y="248.20000000000002" font-family="Liberation Sans" font-size="2.6" fill="#4a4a4a" textLength="6.47999999999999" lengthAdjust="spacingAndGlyphs">xxxxxxx</text>
<text x="524.7" y="216.3" font-family="Liberation Sans" font-size="2.6" fill="#4a4a4a" textLength="16.09999999999991" lengthAdjust="spacingAndGlyphs">1. xxxxx xxxx xx</text>
<text x="529.1275" y="218.4" font-family="Liberation Sans" font-size="2.6" fill="#4a4a4a" textLength="7.244999999999959" lengthAdjust="spacingAndGlyphs">xxxxxxx</text>
<text x="511" y="277.5" font-family="Liberation Sans" font-size="2.6" fill="#4a4a4a" textLength="15" lengthAdjust="spacingAndGlyphs">1. xxxxx xxxx x</text>
<text x="515.125" y="279.59999999999997" font-family="Liberation Sans" font-size="2.6" fill="#4a4a4a" textLength="6.75" lengthAdjust="spacingAndGlyphs">xxxxxxx</text>
<text x="513" y="285.5" font-family="Liberation Sans" font-size="2.6" fill="#4a4a4a" textLength="11.399999999999977" lengthAdjust="spacingAndGlyphs">1. xxxxx xxx</text>
<text x="516.135" y="287.59999999999997" font-family="Liberation Sans" font-size="2.6" fill="#4a4a4a" textLength="5.12999999999999" lengthAdjust="spacingAndGlyphs">xxxxxxx</text>
<text x="375.6" y="273.6" font-family="Liberation Sans" font-size="2.6" fill="#4a4a4a" textLength="23.099999999999966" lengthAdjust="spacingAndGlyphs">1. xxxxx xxxx xxxxxxxx</text>
<text x="374.7" y="279.0" font-family="Liberation Sans" font-size="2.6" fill="#4a4a4a" textLength="25.5" lengthAdjust="spacingAndGlyphs">1. xxxxx xxxx xxxxxxxxxx</text>
<text x="381.7125" y="281.09999999999997" font-family="Liberation Sans" font-size="2.6" fill="#4a4a4a" textLength="11.475" lengthAdjust="spacingAndGlyphs">xxxxxxx</text>
<text x="422" y="287.7" font-family="Liberation Sans" font-size="2.6" fill="#4a4a4a" textLength="21.600000000000023" lengthAdjust="spacingAndGlyphs">1. xxxxx xxxx xxxxxxx</text>
<text x="430" y="271.2" font-family="Liberation Sans" font-size="2.6" fill="#4a4a4a" textLength="16.80000000000001" lengthAdjust="spacingAndGlyphs">1. xxxxx xxxx xxx</text>
<text x="385.6" y="316.40000000000003" font-family="Liberation Sans" font-size="2.6" fill="#4a4a4a" textLength="23.69999999999999" lengthAdjust="spacingAndGlyphs">1. xxxxx xxxx xxxxxxxx</text>
<text x="392.1175" y="318.5" font-family="Liberation Sans" font-size="2.6" fill="#4a4a4a" textLength="10.664999999999996" lengthAdjust="spacingAndGlyphs">xxxxxxx</text>
<text x="516.7" y="342.8" font-family="Liberation Sans" font-size="2.6" fill="#4a4a4a" textLength="19.799999999999955" lengthAdjust="spacingAndGlyphs">1. xxxxx xxxx xxxxx</text>
<text x="522.145" y="344.9" font-family="Liberation Sans" font-size="2.6" fill="#4a4a4a" textLength="8.90999999999998" lengthAdjust="spacingAndGlyphs">xxxxxxx</text>
<text x="525.7" y="398.2" font-family="Liberation Sans" font-size="2.6" fill="#4a4a4a" textLength="15.5" lengthAdjust="spacingAndGlyphs">1. xxxxx xxxx x</text>
<text x="529.9625000000001" y="400.29999999999995" font-family="Liberation Sans" font-size="2.6" fill="#4a4a4a" textLength="6.9750000000000005" lengthAdjust="spacingAndGlyphs">xxxxxxx</text>
<text x="540.3" y="404.6" font-family="Liberation Sans" font-size="2.6" fill="#4a4a4a" textLength="13.700000000000045" lengthAdjust="spacingAndGlyphs">1. xxxxx xxxx </text>
<text x="544.0675" y="406.7" font-family="Liberation Sans" font-size="2.6" fill="#4a4a4a" textLength="6.1650000000000205" lengthAdjust="spacingAndGlyphs">xxxxxxx</text>
<text x="270.6" y="306.3" font-family="Liberation Sans" font-size="2.6" fill="#4a4a4a" textLength="15.5" lengthAdjust="spacingAndGlyphs">1. xxxxx xxxx x</text>
<text x="274.8625" y="308.4" font-family="Liberation Sans" font-size="2.6" fill="#4a4a4a" textLength="6.9750000000000005" lengthAdjust="spacingAndGlyphs">xxxxxxx</text>
<text x="282.5" y="320.8" font-family="Liberation Sans" font-size="2.6" fill="#4a4a4a" textLength="12.800000000000011" lengthAdjust="spacingAndGlyphs">1. xxxxx xxxx</text>
<text x="286.02" y="322.9" font-family="Liberation Sans" font-size="2.6" fill="#4a4a4a" textLength="5.760000000000005" lengthAdjust="spacingAndGlyphs">xxxxxxx</text>
<text x="277" y="331.8" font-family="Liberation Sans" font-size="2.6" fill="#4a4a4a" textLength="13.699999999999989" lengthAdjust="spacingAndGlyphs">1. xxxxx xxxx </text>
<text x="280.7675" y="333.9" font-family="Liberation Sans" font-size="2.6" fill="#4a4a4a" textLength="6.164999999999995" lengthAdjust="spacingAndGlyphs">xxxxxxx</text>
<text x="241.5" y="321.8" font-family="Liberation Sans" font-size="2.6" fill="#4a4a4a" textLength="16.399999999999977" lengthAdjust="spacingAndGlyphs">1. xxxxx xxxx xx</text>
<text x="246.01" y="323.9" font-family="Liberation Sans" font-size="2.6" fill="#4a4a4a" textLength="7.37999999999999" lengthAdjust="spacingAndGlyphs">xxxxxxx</text>
<text x="307" y="304.5" font-family="Liberation Sans" font-size="2.6" fill="#4a4a4a" textLength="23" lengthAdjust="spacingAndGlyphs">1. xxxxx xxxx xxxxxxxx</text>
<text x="313.325" y="306.59999999999997" font-family="Liberation Sans" font-size="2.6" fill="#4a4a4a" textLength="10.35" lengthAdjust="spacingAndGlyphs">xxxxxxx</text>
<text x="312.6" y="316.3" font-family="Liberation Sans" font-size="2.6" fill="#4a4a4a" textLength="17.399999999999977" lengthAdjust="spacingAndGlyphs">1. xxxxx xxxx xxx</text>
<text x="317.385" y="318.4" font-family="Liberation Sans" font-size="2.6" fill="#4a4a4a" textLength="7.82999999999999" lengthAdjust="spacingAndGlyphs">xxxxxxx</text>
<text x="308" y="331.8" font-family="Liberation Sans" font-size="2.6" fill="#4a4a4a" textLength="22" lengthAdjust="spacingAndGlyphs">1. xxxxx xxxx xxxxxxx</text>
<text x="314.05" y="333.9" font-family="Liberation Sans" font-size="2.6" fill="#4a4a4a" textLength="9.9" lengthAdjust="spacingAndGlyphs">xxxxxxx</text>
<text x="286.1" y="378.2" font-family="Liberation Sans" font-size="2.6" fill="#4a4a4a" textLength="14.599999999999966" lengthAdjust="spacingAndGlyphs">1. xxxxx xxxx x</text>
<text x="290.115" y="380.29999999999995" font-family="Liberation Sans" font-size="2.6" fill="#4a4a4a" textLength="6.569999999999985" lengthAdjust="spacingAndGlyphs">xxxxxxx</text>
<text x="271.6" y="398.2" font-family="Liberation Sans" font-size="2.6" fill="#4a4a4a" textLength="25.399999999999977" lengthAdjust="spacingAndGlyphs">1. xxxxx xxxx xxxxxxxxxx</text>
<text x="278.58500000000004" y="400.29999999999995" font-family="Liberation Sans" font-size="2.6" fill="#4a4a4a" textLength="11.42999999999999" lengthAdjust="spacingAndGlyphs">xxxxxxx</text>
<text x="239.7" y="404.2" font-family="Liberation Sans" font-size="2.6" fill="#4a4a4a" textLength="21.80000000000001" lengthAdjust="spacingAndGlyphs">1. xxxxx xxxx xxxxxxx</text>
<text x="245.695" y="406.29999999999995" font-family="Liberation Sans" font-size="2.6" fill="#4a4a4a" textLength="9.810000000000006" lengthAdjust="spacingAndGlyphs">xxxxxxx</text>
<text x="337.7" y="377.5" font-family="Liberation Sans" font-size="2.6" fill="#4a4a4a" textLength="16.69999999999999" lengthAdjust="spacingAndGlyphs">1. xxxxx xxxx xx</text>
<text x="342.29249999999996" y="379.59999999999997" font-family="Liberation Sans" font-size="2.6" fill="#4a4a4a" textLength="7.514999999999995" lengthAdjust="spacingAndGlyphs">xxxxxxx</text>
<text x="387.7" y="381.0" font-family="Liberation Sans" font-size="2.6" fill="#4a4a4a" textLength="25.0" lengthAdjust="spacingAndGlyphs">1. xxxxx xxxx xxxxxxxxx</text>
</svg>
<svg width="768" height="543" viewBox="0 0 768 543">
<circle cx="38.8" cy="83.2" r="2.1" fill="#e02020"/><rect x="40.5" y="80" width="1.8" height="4.5" fill="#40b040"/><rect x="42.3" y="80.8" width="2.4" height="5" fill="#e89020"/>
<rect x="670.5" y="81.6" width="5.3" height="0.9" fill="#333"/>
<rect x="694.2" y="80.3" width="4" height="3.8" fill="none" stroke="#333" stroke-width="0.9"/><path d="M695.4 79.2 h3.9 v3.8" fill="none" stroke="#333" stroke-width="0.8"/>
<path d="M717 79.5 l5.5 5.5 M722.5 79.5 l-5.5 5.5" stroke="#333" stroke-width="0.9"/>
<ellipse cx="43.6" cy="91.8" rx="3.4" ry="2.2" fill="#68b0e8"/><ellipse cx="44.2" cy="93.8" rx="3.2" ry="1.6" fill="#88c4f0"/><ellipse cx="43.8" cy="92.6" rx="1.8" ry="1" fill="#e0eef8"/>
<rect x="704.5" y="89.8" width="7" height="6.6" fill="#f4f4f4"/><rect x="714" y="89.8" width="7" height="6.6" fill="#f4f4f4"/><rect x="724" y="89.8" width="7" height="6.6" fill="#f4f4f4"/>
<rect x="706.3" y="94.2" width="3" height="0.9" fill="#333"/><rect x="716" y="90.8" width="3.8" height="3.6" fill="#c8c8c8" stroke="#888" stroke-width="0.5"/><path d="M726.3 91.3 l2.8 2.8 M729.1 91.3 l-2.8 2.8" stroke="#555" stroke-width="0.7"/>
<rect x="37.8" y="100.5" width="1" height="11" fill="#c8c8c8"/>
<rect x="99.3" y="101.3" width="1" height="9.700000000000003" fill="#a8a8a8"/>
<rect x="126.7" y="101.3" width="1" height="9.700000000000003" fill="#a8a8a8"/>
<rect x="177.9" y="101.3" width="1" height="9.700000000000003" fill="#a8a8a8"/>
<rect x="206.0" y="101.3" width="1" height="9.700000000000003" fill="#a8a8a8"/>
<rect x="220.9" y="101.3" width="1" height="9.700000000000003" fill="#a8a8a8"/>
<rect x="302.0" y="101.3" width="1" height="9.700000000000003" fill="#a8a8a8"/>
<rect x="364.5" y="101.3" width="1" height="9.700000000000003" fill="#a8a8a8"/>
<rect x="484.5" y="101.3" width="1" height="9.700000000000003" fill="#a8a8a8"/>
<rect x="238.5" y="99" width="4" height="14" fill="#e6e6e6"/><rect x="240" y="100.5" width="0.8" height="11" fill="#c8c8c8"/>
<rect x="404" y="99" width="5" height="14" fill="#e6e6e6"/><rect x="406" y="100.5" width="0.8" height="11" fill="#c8c8c8"/><rect x="407.5" y="100.5" width="0.8" height="11" fill="#c8c8c8"/>
<path d="M43 103 h4 l2 2 v5 h-6z" fill="#fff" stroke="#7890b0" stroke-width="0.7"/><circle cx="43" cy="103" r="1.5" fill="#f0d040"/>
<rect x="52.7" y="102.5" width="8.7" height="7" rx="1" fill="#b06830"/><rect x="53.5" y="102" width="4" height="3" fill="#e8b840"/>
<path d="M64.8 103.8 h3 l1 1 h4.2 v4.7 h-8.2z" fill="#e8b830"/><path d="M66 105.5 h7 l-1 4 h-7.2z" fill="#f8d860"/>
<rect x="76.8" y="102" width="7.1" height="7.7" fill="#4048c0"/><rect x="78" y="102.5" width="4.5" height="3" fill="#e0e4f0"/><rect x="78.5" y="107" width="3.5" height="2.4" fill="#203080"/>
<path d="M89 104.5 l2.5 -2.5 h4.5 v5 l-2.5 2.7 h-4.5z" fill="#5858c8"/><path d="M89 104.5 h4.5 v5.2" fill="none" stroke="#9aa0f0" stroke-width="0.6"/>
<rect x="104.5" y="102.5" width="5" height="7" fill="#e8e8e8" stroke="#a0a0a0" stroke-width="0.6"/><path d="M107 109.5 l2.5 -6 l2.5 6z" fill="#909090"/>
<rect x="115" y="105" width="8" height="4.5" rx="1.2" fill="#8aa0c0"/><rect x="117" y="102.5" width="5" height="3" fill="#e8eef8" stroke="#98a8c0" stroke-width="0.5"/><rect x="116" y="107" width="6" height="1.5" fill="#dce4f0"/>
<path d="M133 102.5 l4.5 5 M137.5 102.5 l-4.5 5" stroke="#a0a0a0" stroke-width="0.9"/><circle cx="133.5" cy="108.7" r="1" fill="#a8a8a8"/><circle cx="137" cy="108.7" r="1" fill="#a8a8a8"/>
<rect x="143.5" y="103" width="4.5" height="5" fill="#b4b4b4"/><rect x="146.5" y="104.8" width="4.8" height="5" fill="#9c9c9c"/>
<rect x="155.5" y="103.5" width="5" height="6" fill="#e8b820"/><rect x="156.5" y="102.3" width="3" height="1.5" fill="#b08020"/><rect x="158.5" y="106" width="5" height="3.8" rx="1" fill="#a8bcd8"/>
<path d="M168 102.8 l6 6.5 M174 102.8 l-6 6.5" stroke="#a8a8a8" stroke-width="0.9"/>
<path d="M185 104 q2 -1.8 4.5 0 q1.5 2 -0.5 4.8 M185 103 v2.7 h2.6" fill="none" stroke="#2a6ae0" stroke-width="1.2"/>
<path d="M201 104 q-2 -1.8 -4.5 0 q-1.5 2 0.5 4.8 M201 103 v2.7 h-2.6" fill="none" stroke="#a0a0a0" stroke-width="1.1"/>
<rect x="210.5" y="104.5" width="5.5" height="5.5" fill="#8c8c8c"/><rect x="212.5" y="102.5" width="5.5" height="3.5" fill="#a8a8a8"/>
<path d="M225.5 106 l4 -4 l4.8 3 l-1 4.5 h-5z" fill="#8080d8"/><circle cx="230" cy="107.5" r="1.6" fill="#e8ecff"/>
<rect x="244" y="103" width="7.8" height="7" fill="#30a050"/><rect x="244" y="103" width="1.8" height="7" fill="#3070d0"/><rect x="248.5" y="102" width="3.3" height="2.6" fill="#f0e060"/>
<rect x="256" y="103.5" width="5.5" height="5" fill="#e0a820"/><rect x="259" y="106.5" width="5" height="3.5" fill="#5070b0"/>
<path d="M267 103 h4 l1.5 1.5 h2.5 v4 h-8z" fill="#f0c840"/><rect x="270" y="106.5" width="5" height="3.5" fill="#3858a8"/>
<rect x="278.5" y="103" width="9.5" height="7" fill="#d8e4f4" stroke="#90a8d0" stroke-width="0.6"/><path d="M280.5 106.5 h4 M283 104.8 l2 1.7 l-2 1.7" stroke="#40a030" stroke-width="1.2" fill="none"/>
<rect x="291.5" y="102.5" width="7" height="7.5" fill="#d8eaf8" stroke="#60a0e0" stroke-width="0.6"/><path d="M293 106 l1.8 2.5 l3.8 -4" stroke="#e02030" stroke-width="1" fill="none"/>
<circle cx="311" cy="106" r="4" fill="#a4a4a4"/>
<rect x="318.2" y="102.5" width="8" height="7.5" fill="#a0a0a0"/><rect x="319" y="105" width="1.8" height="1.5" fill="#e0e0e0"/>
<path d="M330.5 109.5 l6.5 -6.8" stroke="#e8b830" stroke-width="1.6"/><circle cx="330.8" cy="109.2" r="0.9" fill="#d03030"/>
<path d="M345 102 v8" stroke="#909090" stroke-width="1.2"/><path d="M344 106 q3 -2 5 1 l-1 3h-3z" fill="#8050d0"/><rect x="348" y="106" width="2" height="3" fill="#e040a0"/>
<path d="M354.8 109.5 l3 -6.3 l3 6.3 M356 107.3 h3.6" stroke="#22aa22" stroke-width="1.3" fill="none"/><rect x="354" y="109" width="2.2" height="0.9" fill="#22aa22"/><rect x="359.6" y="109" width="2.2" height="0.9" fill="#22aa22"/>
<path d="M369 103 h4 l1 1 h3.5 v6 h-8.5z" fill="#a8a8a8"/>
<path d="M381 106 l3 -2.8 v1.8 h5 v2.3 h-5 v1.8z" fill="#a0a0a0"/><path d="M401 106 l-3 -2.8 v1.8 h-5 v2.3 h5 v1.8z" fill="#a0a0a0"/>
<rect x="410" y="102.5" width="9.5" height="7.5" fill="#e8f0fc" stroke="#4a78c8" stroke-width="0.7"/><rect x="410" y="102.5" width="9.5" height="2" fill="#5a90e0"/><path d="M412.5 105.5 l2 3 l2.5 -3" stroke="#2040a0" stroke-width="0.9" fill="none"/>
<rect x="421.7" y="102.5" width="9.3" height="7.5" fill="#a8a8a8"/>
<rect x="434" y="102.5" width="9.5" height="7.5" fill="#c8d8f0"/><rect x="434" y="102.5" width="9.5" height="2" fill="#5a88d8"/><rect x="440" y="105" width="1.5" height="4" fill="#405080"/>
<rect x="445.6" y="102.5" width="9.4" height="7.5" fill="#b8c4d8"/><rect x="445.6" y="102.5" width="9.4" height="2" fill="#5a80c8"/><rect x="449" y="105" width="1.3" height="4" fill="#405080"/><rect x="452" y="105" width="1.3" height="4" fill="#405080"/>
<rect x="461" y="102.5" width="9.6" height="7.5" fill="#a8c0e8"/><rect x="461" y="102.5" width="9.6" height="2" fill="#4a70c8"/><circle cx="463.5" cy="108.8" r="1.8" fill="#20a030"/>
<rect x="472.7" y="102.5" width="9.3" height="7.5" fill="#a4a4a4"/><path d="M475 105 l1.5 2 l2.5 -2" stroke="#e8e8e8" stroke-width="0.8" fill="none"/>
<rect x="489.5" y="102.5" width="8.5" height="7" fill="#e0ecf8" stroke="#3a70c8" stroke-width="0.6"/><rect x="489.5" y="102.5" width="8.5" height="1.8" fill="#3a70d0"/><circle cx="496.8" cy="109.8" r="0.9" fill="#d07020"/>
<rect x="501" y="103" width="8" height="6.5" fill="#d0d8e4" stroke="#a0acc0" stroke-width="0.6"/>
<rect x="511.3" y="100.5" width="10.7" height="10.5" fill="#cce4f7" stroke="#99c9ef" stroke-width="0.6"/><rect x="513" y="103" width="7.5" height="5" fill="#8090b0"/><rect x="513.5" y="104.5" width="6.5" height="2" fill="#b0c0e0"/>
<path d="M382.5 181.5 l6 6 M383.5 181 l3 1 l-2 2z" stroke="#707070" stroke-width="1.3" fill="#707070"/>
<path d="M394.5 185 q0 -4 3.5 -4 q3.5 0 3.5 4 v2 h-7z" fill="#f8f8f8" stroke="#909090" stroke-width="0.6"/><rect x="395" y="187.2" width="6" height="1.8" fill="#2040c0"/>
<circle cx="408" cy="184.3" r="3" fill="#e8ecf4" stroke="#8090a8" stroke-width="0.7"/><path d="M410 186.5 l2.3 2.3" stroke="#c0a020" stroke-width="1.2"/>
<circle cx="420" cy="184.3" r="3" fill="#e8eef8" stroke="#8090a8" stroke-width="0.7"/><path d="M422 186.5 l2.3 2.3" stroke="#c0a020" stroke-width="1.2"/>
<circle cx="432" cy="184.3" r="3" fill="#7aa8e8" stroke="#8090a8" stroke-width="0.7"/><path d="M434 186.5 l2.3 2.3" stroke="#c0a020" stroke-width="1.2"/>
<rect x="441" y="184" width="7.5" height="5" fill="#e8e8e8" stroke="#a0a0a0" stroke-width="0.5"/><ellipse cx="446" cy="182.8" rx="2.8" ry="1.6" fill="#e0b020"/>
<path d="M453.5 180.5 l4 5 M458.5 180.5 l-4 5" stroke="#3070d0" stroke-width="1"/><circle cx="453.5" cy="188" r="1.6" fill="none" stroke="#e03030" stroke-width="0.9"/><circle cx="458.5" cy="188" r="1.6" fill="none" stroke="#e03030" stroke-width="0.9"/>
<rect x="464" y="181.5" width="7.5" height="7.5" fill="#d8a830" stroke="#a07820" stroke-width="0.5"/><circle cx="466" cy="184" r="0.7" fill="#3050a0"/><circle cx="469.5" cy="184" r="0.7" fill="#3050a0"/><circle cx="467.8" cy="186.8" r="0.7" fill="#3050a0"/>
<rect x="475.5" y="182.5" width="8.5" height="5" rx="2.5" fill="#b8d8f8" stroke="#70a8e0" stroke-width="0.6"/>
<path d="M488 185 h7 M493 183.2 l2 1.8 l-2 1.8" stroke="#4050d0" stroke-width="0.8" fill="none"/>
<circle cx="502.8" cy="185" r="1.3" fill="#909090"/><circle cx="513.8" cy="185" r="3.3" fill="#a0a0a0"/><path d="M525 182 l3 3 l-3 3 l-3 -3z" fill="#a0a0a0"/>
<path d="M535 182 v2.5 h6 v-2.5 M538 184.5 v4 M535.5 186 h5" stroke="#4050c0" stroke-width="1" fill="none"/>
<rect x="546.3" y="181.3" width="4.8" height="7.5" rx="1" fill="#f0c020" stroke="#c09010" stroke-width="0.5"/>
<rect x="558" y="181.5" width="7" height="7" fill="#909090"/><rect x="558" y="182.5" width="7" height="0.8" fill="#c8c8c8"/>
<circle cx="572" cy="181.8" r="1.2" fill="#1a60d0"/><path d="M572 183 v5.5 M569.8 184.5 h4.4" stroke="#1a60d0" stroke-width="1.6"/>
<path d="M580.5 186.5 h6 v2.5 h-6z M586.5 182 v4.5" fill="#a0a0a0" stroke="#a0a0a0" stroke-width="0.8"/>
<path d="M592.5 181.5 h5 l1.5 1.5 v6 h-6.5z" fill="#f8f8ff" stroke="#8090b0" stroke-width="0.6"/>
<rect x="604" y="182" width="7" height="6" fill="#e8c860" stroke="#90a0c8" stroke-width="0.5"/>
<path d="M616 188 l2.5 -2 M620.5 184.5 l2.5 -2" stroke="#5070c8" stroke-width="1.4"/>
<rect x="627.5" y="183" width="8" height="4.5" rx="2.2" fill="#6888c8"/>
<rect x="639" y="182" width="8" height="6" fill="#c8d8f0" stroke="#7090c8" stroke-width="0.6"/><rect x="642.5" y="183.5" width="1" height="3" fill="#4060a0"/>
<path d="M651.5 182 l5 5" stroke="#606890" stroke-width="0.8"/>
<path d="M663.5 182.5 q4 0 6 4.5" stroke="#606890" stroke-width="0.8" fill="none"/>
<rect x="675" y="182" width="6.5" height="5.8" fill="#dde6f8" stroke="#6070c8" stroke-width="0.7"/>
<ellipse cx="690.4" cy="185" rx="3.6" ry="2.7" fill="#dde6f8" stroke="#6070c8" stroke-width="0.7"/>
<ellipse cx="701.7" cy="185" rx="3.8" ry="2.5" fill="#dde6f8" stroke="#6070c8" stroke-width="0.7"/>
<path d="M710.5 188 l2.5 -2.5 l1.5 1 l3 -4" stroke="#606890" stroke-width="0.8" fill="none"/>
<path d="M721.5 187.5 l1 -3 l2 -1.5 h3 v3 l-1 1.5z" fill="#dde6f8" stroke="#6070c8" stroke-width="0.7"/>
<rect x="650.9" y="198.2" width="7.8" height="3.5" fill="#e8c040"/><rect x="652.5" y="199.3" width="5" height="1.2" fill="#f8e8b0"/>
<rect x="664.2" y="197.2" width="4.6" height="5.6" fill="#e8e8ff" stroke="#6878d8" stroke-width="0.6"/>
<circle cx="676" cy="198" r="1.6" fill="#70b8e8"/><path d="M676 199 v2.5 h2" stroke="#7060c0" stroke-width="0.6" fill="none"/><rect x="677.5" y="200" width="3" height="2.8" fill="#e0b840"/>
<rect x="686.5" y="197.8" width="7.5" height="4.6" rx="1.8" fill="#80b8e8"/>
<path d="M701.1 198.5 l1.5 1.5 l-1.5 1.5 l-1.5 -1.5z" fill="#fff" stroke="#a0a0b0" stroke-width="0.5"/>
<circle cx="711.5" cy="198.3" r="1.6" fill="#70b0e8"/><circle cx="714.8" cy="201.5" r="1.7" fill="#70b0e8"/><path d="M712 199 l2.5 2" stroke="#5080c0" stroke-width="0.6"/>
<circle cx="46.6" cy="455.7" r="5.3" fill="#a8b0bc"/><circle cx="44.8" cy="454.3" r="3.8" fill="#c8d0d8"/><ellipse cx="49" cy="458" rx="3.3" ry="2" fill="#f4f4f4"/>
<rect x="209" y="450.3" width="6" height="5.7" fill="#42b8f0"/><rect x="215.5" y="450.3" width="5.9" height="5.7" fill="#3ab0f0"/><rect x="209" y="456.4" width="6" height="5.6" fill="#28a0e8"/><rect x="215.5" y="456.4" width="5.9" height="5.6" fill="#1e98e4"/>
<circle cx="236.4" cy="455.2" r="2.7" fill="none" stroke="#3a3a3a" stroke-width="1.3"/><path d="M238.4 457.3 l2.2 2.2" stroke="#3a3a3a" stroke-width="1.4"/>
<circle cx="352" cy="455.7" r="5.8" fill="#7a6ad8"/><path d="M347 461 l1 -3 l3 2z" fill="#7a6ad8"/><rect x="348.8" y="453.5" width="4.5" height="4" rx="0.6" fill="#fff"/><path d="M353.5 455.5 l2.3 -1.5 v3z" fill="#fff"/>
<path d="M367.8 450.5 h5 l1.5 1.3 h7 v9.8 h-13.5z" fill="#f0b830"/><rect x="367.8" y="453" width="13.5" height="8.6" fill="#f8cc50"/><rect x="370.5" y="458" width="8" height="3.6" fill="#1a78d0"/>
<defs><linearGradient id="edg" x1="0" y1="1" x2="1" y2="0"><stop offset="0" stop-color="#0a5cb0"/><stop offset="0.55" stop-color="#1a9ae0"/><stop offset="1" stop-color="#5ad27a"/></linearGradient></defs><circle cx="397.1" cy="455.7" r="6.2" fill="url(#edg)"/><path d="M393 457 q0.5 -3.5 4.5 -3.5 q3.5 0 4 2.5 q-2 -1 -4 -0.2 q-2 1 -1.5 3.5 q-2.5 -0.5 -3 -2.3z" fill="#0e4e98"/><path d="M396.5 458.2 q1.5 2 5 0.8" stroke="#7ce0f0" stroke-width="1" fill="none"/><rect x="395.6" y="464.5" width="3" height="1" fill="#a0a0a0"/>
<path d="M413 453 h12.2 v9.2 h-12.2z" fill="#f4f4f4"/><path d="M416.5 453 q0 -3 2.6 -3 q2.6 0 2.6 3" stroke="#30a0b0" stroke-width="1" fill="none"/><rect x="416.7" y="455" width="2" height="2" fill="#f25022"/><rect x="419.2" y="455" width="2" height="2" fill="#7fba00"/><rect x="416.7" y="457.5" width="2" height="2" fill="#00a4ef"/><rect x="419.2" y="457.5" width="2" height="2" fill="#ffb900"/>
<path d="M445 450 l3.2 1.6 v9 l-3.2 1.6 l-7 -6.2 l-2.2 1.7 v-5.2 l2.2 1.7z" fill="#2a9ae8"/><path d="M445 453.5 l-3.2 2.7 l3.2 2.7z" fill="#1e1e22"/><rect x="440" y="464.5" width="3" height="1" fill="#a0a0a0"/>
<circle cx="464" cy="456.3" r="5.3" fill="none" stroke="#28c048" stroke-width="1.4"/><path d="M459.3 461.5 l1 -2.8 l2 1.8z" fill="#28c048"/><path d="M462 454 q0.5 3 3.5 4" stroke="#28c048" stroke-width="1.3" fill="none"/><circle cx="469.3" cy="451" r="3.4" fill="#1890f0"/><text x="468.2" y="453" font-size="5" fill="#fff" font-family="Liberation Sans">3</text><rect x="462.5" y="464.5" width="3" height="1" fill="#a0a0a0"/>
<rect x="481" y="449.9" width="12.3" height="12.3" rx="1" fill="#f07a28"/><path d="M484 452.8 q1.5 -0.8 3.2 1.5 q1.7 -2.3 3.2 -1.5 q1 1 -1.5 3.2 q2.5 2.2 1.5 3.2 q-1.5 0.8 -3.2 -1.5 q-1.7 2.3 -3.2 1.5 q-1 -1 1.5 -3.2 q-2.5 -2.2 -1.5 -3.2z" fill="none" stroke="#fff" stroke-width="1"/><rect x="485.5" y="464.5" width="3" height="1" fill="#a0a0a0"/>
<circle cx="509.1" cy="455.7" r="6" fill="#1ed760"/><path d="M505.5 453.8 q3.8 -1.2 7.5 0.5 M506 456 q3 -0.8 6.3 0.5 M506.5 458 q2.5 -0.6 5 0.4" stroke="#1e1e22" stroke-width="0.9" fill="none"/><rect x="507.5" y="464.5" width="3" height="1" fill="#a0a0a0"/>
<circle cx="532" cy="455.7" r="6" fill="#e04030"/><path d="M532 455.7 L538 455.7 A6 6 0 0 1 529 460.9z" fill="#f8c020"/><path d="M532 455.7 L529 460.9 A6 6 0 0 1 526.8 452.7z" fill="#30a850"/><circle cx="532" cy="455.7" r="2.6" fill="#fff"/><circle cx="532" cy="455.7" r="2" fill="#2a70e0"/><circle cx="537.3" cy="450.6" r="3" fill="#b8b0a8"/><rect x="530.5" y="464.5" width="3" height="1" fill="#a0a0a0"/>
<path d="M548 458.5 l3 -2 h8 l-3 2.2z" fill="#4a80d8"/><circle cx="551.3" cy="455" r="2.2" fill="#e02020"/><rect x="553.8" y="451" width="1.6" height="5" fill="#40b040"/><rect x="556" y="452" width="2" height="5" fill="#f0c020"/><rect x="550.2" y="464.5" width="8.2" height="1.3" rx="0.6" fill="#4cc2ff"/>
<path d="M584.8 457 l2.3 -2.3 l2.3 2.3" stroke="#e8e8e8" stroke-width="0.9" fill="none"/>
<path d="M598.5 458.7 q0 -2.5 2.5 -2.5 q1 -2.5 3.5 -2 q2.8 0.5 2.8 3 q0.8 0.3 0.8 1.5z" fill="#f0f0f0"/>
<path d="M637.8 454.5 q4.4 -3.5 8.8 0 l-4.4 4.3z" fill="none" stroke="#e0e0e0" stroke-width="0.8"/>
<path d="M650 454.5 h1.8 l2.5 -2 v7 l-2.5 -2 h-1.8z" fill="none" stroke="#e0e0e0" stroke-width="0.7"/><path d="M655.5 454 q1 2 0 4 M657.2 453 q1.5 3 0 6" stroke="#e0e0e0" stroke-width="0.6" fill="none"/>
<rect x="662" y="453.3" width="8.5" height="5.4" rx="1" fill="none" stroke="#e0e0e0" stroke-width="0.7"/><rect x="663.5" y="455" width="4" height="2.2" fill="#e0e0e0"/><path d="M663 452.3 l1.5 1" stroke="#e0e0e0" stroke-width="0.6"/>
<path d="M716 458.8 q0 -5.5 2.5 -5.5 q2.5 0 2.5 5.5 z" fill="#4cb0f8"/><rect x="715.3" y="458.3" width="6.4" height="1" fill="#4cb0f8"/><circle cx="718.5" cy="460" r="0.9" fill="#4cb0f8"/>
</svg>
<svg width="768" height="543" viewBox="0 0 768 543" style="pointer-events:none;will-change:transform">
<path d="M-133.9 -124.8 L-185.9 -176.8 M-133.9 -64.8 L-185.9 -12.8 M-73.9 -124.8 L-21.9 -176.8 M-73.9 -64.8 L-21.9 -12.8 M-133.9 52.2 L-185.9 0.2 M-133.9 112.2 L-185.9 164.2 M-73.9 52.2 L-21.9 0.2 M-73.9 112.2 L-21.9 164.2 M-133.9 229.2 L-185.9 177.2 M-133.9 289.2 L-185.9 341.2 M-73.9 229.2 L-21.9 177.2 M-73.9 289.2 L-21.9 341.2 M-133.9 406.2 L-185.9 354.2 M-133.9 466.2 L-185.9 518.2 M-73.9 406.2 L-21.9 354.2 M-73.9 466.2 L-21.9 518.2 M-133.9 583.2 L-185.9 531.2 M-133.9 643.2 L-185.9 695.2 M-73.9 583.2 L-21.9 531.2 M-73.9 643.2 L-21.9 695.2 M52.2 -124.8 L0.2 -176.8 M52.2 -64.8 L0.2 -12.8 M112.2 -124.8 L164.2 -176.8 M112.2 -64.8 L164.2 -12.8 M52.2 52.2 L0.2 0.2 M52.2 112.2 L0.2 164.2 M112.2 52.2 L164.2 0.2 M112.2 112.2 L164.2 164.2 M52.2 229.2 L0.2 177.2 M52.2 289.2 L0.2 341.2 M112.2 229.2 L164.2 177.2 M112.2 289.2 L164.2 341.2 M52.2 406.2 L0.2 354.2 M52.2 466.2 L0.2 518.2 M112.2 406.2 L164.2 354.2 M112.2 466.2 L164.2 518.2 M52.2 583.2 L0.2 531.2 M52.2 643.2 L0.2 695.2 M112.2 583.2 L164.2 531.2 M112.2 643.2 L164.2 695.2 M238.4 -124.8 L186.4 -176.8 M238.4 -64.8 L186.4 -12.8 M298.4 -124.8 L350.4 -176.8 M298.4 -64.8 L350.4 -12.8 M238.4 52.2 L186.4 0.2 M238.4 112.2 L186.4 164.2 M298.4 52.2 L350.4 0.2 M298.4 112.2 L350.4 164.2 M238.4 229.2 L186.4 177.2 M238.4 289.2 L186.4 341.2 M298.4 229.2 L350.4 177.2 M298.4 289.2 L350.4 341.2 M238.4 406.2 L186.4 354.2 M238.4 466.2 L186.4 518.2 M298.4 406.2 L350.4 354.2 M298.4 466.2 L350.4 518.2 M238.4 583.2 L186.4 531.2 M238.4 643.2 L186.4 695.2 M298.4 583.2 L350.4 531.2 M298.4 643.2 L350.4 695.2 M424.6 -124.8 L372.6 -176.8 M424.6 -64.8 L372.6 -12.8 M484.6 -124.8 L536.6 -176.8 M484.6 -64.8 L536.6 -12.8 M424.6 52.2 L372.6 0.2 M424.6 112.2 L372.6 164.2 M484.6 52.2 L536.6 0.2 M484.6 112.2 L536.6 164.2 M424.6 229.2 L372.6 177.2 M424.6 289.2 L372.6 341.2 M484.6 229.2 L536.6 177.2 M484.6 289.2 L536.6 341.2 M424.6 406.2 L372.6 354.2 M424.6 466.2 L372.6 518.2 M484.6 406.2 L536.6 354.2 M484.6 466.2 L536.6 518.2 M424.6 583.2 L372.6 531.2 M424.6 643.2 L372.6 695.2 M484.6 583.2 L536.6 531.2 M484.6 643.2 L536.6 695.2 M610.8 -124.8 L558.8 -176.8 M610.8 -64.8 L558.8 -12.8 M670.8 -124.8 L722.8 -176.8 M670.8 -64.8 L722.8 -12.8 M610.8 52.2 L558.8 0.2 M610.8 112.2 L558.8 164.2 M670.8 52.2 L722.8 0.2 M670.8 112.2 L722.8 164.2 M610.8 229.2 L558.8 177.2 M610.8 289.2 L558.8 341.2 M670.8 229.2 L722.8 177.2 M670.8 289.2 L722.8 341.2 M610.8 406.2 L558.8 354.2 M610.8 466.2 L558.8 518.2 M670.8 406.2 L722.8 354.2 M670.8 466.2 L722.8 518.2 M610.8 583.2 L558.8 531.2 M610.8 643.2 L558.8 695.2 M670.8 583.2 L722.8 531.2 M670.8 643.2 L722.8 695.2 M797.0 -124.8 L745.0 -176.8 M797.0 -64.8 L745.0 -12.8 M857.0 -124.8 L909.0 -176.8 M857.0 -64.8 L909.0 -12.8 M797.0 52.2 L745.0 0.2 M797.0 112.2 L745.0 164.2 M857.0 52.2 L909.0 0.2 M857.0 112.2 L909.0 164.2 M797.0 229.2 L745.0 177.2 M797.0 289.2 L745.0 341.2 M857.0 229.2 L909.0 177.2 M857.0 289.2 L909.0 341.2 M797.0 406.2 L745.0 354.2 M797.0 466.2 L745.0 518.2 M857.0 406.2 L909.0 354.2 M857.0 466.2 L909.0 518.2 M797.0 583.2 L745.0 531.2 M797.0 643.2 L745.0 695.2 M857.0 583.2 L909.0 531.2 M857.0 643.2 L909.0 695.2 M983.2 -124.8 L931.2 -176.8 M983.2 -64.8 L931.2 -12.8 M1043.2 -124.8 L1095.2 -176.8 M1043.2 -64.8 L1095.2 -12.8 M983.2 52.2 L931.2 0.2 M983.2 112.2 L931.2 164.2 M1043.2 52.2 L1095.2 0.2 M1043.2 112.2 L1095.2 164.2 M983.2 229.2 L931.2 177.2 M983.2 289.2 L931.2 341.2 M1043.2 229.2 L1095.2 177.2 M1043.2 289.2 L1095.2 341.2 M983.2 406.2 L931.2 354.2 M983.2 466.2 L931.2 518.2 M1043.2 406.2 L1095.2 354.2 M1043.2 466.2 L1095.2 518.2 M983.2 583.2 L931.2 531.2 M983.2 643.2 L931.2 695.2 M1043.2 583.2 L1095.2 531.2 M1043.2 643.2 L1095.2 695.2" stroke="#000" stroke-opacity="0.088" stroke-width="1.3" stroke-dasharray="1.6 2.3" fill="none"/>
<path d="M86.3 66.7 L95.8 76.5 L86.3 86.3 L76.8 76.5z" fill="#000" fill-opacity="0.2"/>
<text x="0" y="0" transform="translate(57.8 77.0) rotate(45)" font-family="Liberation Sans" font-size="8.3" fill="#000" fill-opacity="0.04" stroke="#000" stroke-opacity="0.17" stroke-width="0.38">WPS Office</text>
<path d="M86.3 243.7 L95.8 253.5 L86.3 263.3 L76.8 253.5z" fill="#000" fill-opacity="0.2"/>
<text x="0" y="0" transform="translate(57.8 254.0) rotate(45)" font-family="Liberation Sans" font-size="8.3" fill="#000" fill-opacity="0.04" stroke="#000" stroke-opacity="0.17" stroke-width="0.38">WPS Office</text>
<path d="M86.3 420.7 L95.8 430.5 L86.3 440.3 L76.8 430.5z" fill="#000" fill-opacity="0.2"/>
<text x="0" y="0" transform="translate(57.8 431.0) rotate(45)" font-family="Liberation Sans" font-size="8.3" fill="#000" fill-opacity="0.04" stroke="#000" stroke-opacity="0.17" stroke-width="0.38">WPS Office</text>
<path d="M272.6 66.7 L282.1 76.5 L272.6 86.3 L263.1 76.5z" fill="#000" fill-opacity="0.2"/>
<text x="0" y="0" transform="translate(244.1 77.0) rotate(45)" font-family="Liberation Sans" font-size="8.3" fill="#000" fill-opacity="0.04" stroke="#000" stroke-opacity="0.17" stroke-width="0.38">WPS Office</text>
<path d="M272.6 243.7 L282.1 253.5 L272.6 263.3 L263.1 253.5z" fill="#000" fill-opacity="0.2"/>
<text x="0" y="0" transform="translate(244.1 254.0) rotate(45)" font-family="Liberation Sans" font-size="8.3" fill="#000" fill-opacity="0.04" stroke="#000" stroke-opacity="0.17" stroke-width="0.38">WPS Office</text>
<path d="M272.6 420.7 L282.1 430.5 L272.6 440.3 L263.1 430.5z" fill="#000" fill-opacity="0.2"/>
<text x="0" y="0" transform="translate(244.1 431.0) rotate(45)" font-family="Liberation Sans" font-size="8.3" fill="#000" fill-opacity="0.04" stroke="#000" stroke-opacity="0.17" stroke-width="0.38">WPS Office</text>
<path d="M458.8 66.7 L468.2 76.5 L458.8 86.3 L449.2 76.5z" fill="#000" fill-opacity="0.2"/>
<text x="0" y="0" transform="translate(430.2 77.0) rotate(45)" font-family="Liberation Sans" font-size="8.3" fill="#000" fill-opacity="0.04" stroke="#000" stroke-opacity="0.17" stroke-width="0.38">WPS Office</text>
<path d="M458.8 243.7 L468.2 253.5 L458.8 263.3 L449.2 253.5z" fill="#000" fill-opacity="0.2"/>
<text x="0" y="0" transform="translate(430.2 254.0) rotate(45)" font-family="Liberation Sans" font-size="8.3" fill="#000" fill-opacity="0.04" stroke="#000" stroke-opacity="0.17" stroke-width="0.38">WPS Office</text>
<path d="M458.8 420.7 L468.2 430.5 L458.8 440.3 L449.2 430.5z" fill="#000" fill-opacity="0.2"/>
<text x="0" y="0" transform="translate(430.2 431.0) rotate(45)" font-family="Liberation Sans" font-size="8.3" fill="#000" fill-opacity="0.04" stroke="#000" stroke-opacity="0.17" stroke-width="0.38">WPS Office</text>
<path d="M644.9 66.7 L654.4 76.5 L644.9 86.3 L635.4 76.5z" fill="#000" fill-opacity="0.2"/>
<text x="0" y="0" transform="translate(616.4 77.0) rotate(45)" font-family="Liberation Sans" font-size="8.3" fill="#000" fill-opacity="0.04" stroke="#000" stroke-opacity="0.17" stroke-width="0.38">WPS Office</text>
<path d="M644.9 243.7 L654.4 253.5 L644.9 263.3 L635.4 253.5z" fill="#000" fill-opacity="0.2"/>
<text x="0" y="0" transform="translate(616.4 254.0) rotate(45)" font-family="Liberation Sans" font-size="8.3" fill="#000" fill-opacity="0.04" stroke="#000" stroke-opacity="0.17" stroke-width="0.38">WPS Office</text>
<path d="M644.9 420.7 L654.4 430.5 L644.9 440.3 L635.4 430.5z" fill="#000" fill-opacity="0.2"/>
<text x="0" y="0" transform="translate(616.4 431.0) rotate(45)" font-family="Liberation Sans" font-size="8.3" fill="#000" fill-opacity="0.04" stroke="#000" stroke-opacity="0.17" stroke-width="0.38">WPS Office</text>
</svg>
</body></html>
